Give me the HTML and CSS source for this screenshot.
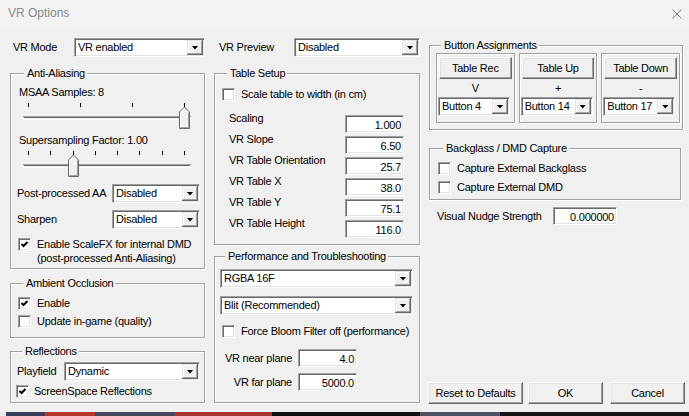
FILE: index.html
```html
<!DOCTYPE html>
<html lang="en">
<head>
    <meta charset="UTF-8">
    <meta name="viewport" content="width=device-width, initial-scale=1.0">
    <title>VR Options</title>
    <link rel="stylesheet" href="styles.css">
</head>
<body>
    <div class="window">
        <div class="title-bar">
            <span class="title-text">VR Options</span>
            <svg class="close-icon" width="10" height="10" viewBox="0 0 10 10">
                <path d="M0.5 0.5L9.5 9.5M9.5 0.5L0.5 9.5" stroke="#7a7a7a" stroke-width="1" fill="none"/>
            </svg>
        </div>

        <div class="dialog">
            <!-- Left column -->
            <div class="column">
                <div class="field-row top-row-left">
                    <span class="field-label">VR Mode</span>
                    <div class="combo combo-mode"><span class="combo-text">VR enabled</span><span class="combo-btn"></span></div>
                </div>

                <div class="group group-aa">
                    <div class="group-title">Anti-Aliasing</div>
                    <div class="caption">MSAA Samples: 8</div>
                    <svg class="slider" width="184" height="30" viewBox="0 0 184 30">
                        <path d="M9.5 3v4M61.5 3v4M113.5 3v4M165.5 3v4" stroke="#000"/>
                        <path d="M4 16.5h168" stroke="#a0a0a0"/>
                        <path d="M5 17.5h166" stroke="#696969"/>
                        <path d="M4 19.5h168" stroke="#fff"/>
                        <path d="M171.5 17v3" stroke="#fff"/>
                        <polygon points="160.5,28.5 160.5,12 165.5,7 170.5,12 170.5,28.5" fill="#f0f0f0" stroke="#696969"/>
                        <polyline points="161.5,27.5 161.5,12.5 165.5,8.5" fill="none" stroke="#fff"/>
                        <polyline points="169.5,12.5 169.5,27.5 161.5,27.5" fill="none" stroke="#a0a0a0"/>
                    </svg>
                    <div class="caption caption-second">Supersampling Factor: 1.00</div>
                    <svg class="slider" width="184" height="30" viewBox="0 0 184 30">
                        <path d="M9.5 3v4M31.5 3v4M54.5 3v4M76.5 3v4M98.5 3v4M120.5 3v4M143.5 3v4M165.5 3v4" stroke="#000"/>
                        <path d="M4 16.5h168" stroke="#a0a0a0"/>
                        <path d="M5 17.5h166" stroke="#696969"/>
                        <path d="M4 19.5h168" stroke="#fff"/>
                        <path d="M171.5 17v3" stroke="#fff"/>
                        <polygon points="49.5,28.5 49.5,12 54.5,7 59.5,12 59.5,28.5" fill="#f0f0f0" stroke="#696969"/>
                        <polyline points="50.5,27.5 50.5,12.5 54.5,8.5" fill="none" stroke="#fff"/>
                        <polyline points="58.5,12.5 58.5,27.5 50.5,27.5" fill="none" stroke="#a0a0a0"/>
                    </svg>
                    <div class="field-row aa-row">
                        <span class="field-label">Post-processed AA</span>
                        <div class="combo combo-aa"><span class="combo-text">Disabled</span><span class="combo-btn"></span></div>
                    </div>
                    <div class="field-row aa-row aa-row-second">
                        <span class="field-label">Sharpen</span>
                        <div class="combo combo-aa"><span class="combo-text">Disabled</span><span class="combo-btn"></span></div>
                    </div>
                    <label class="check check-multi check-scalefx">
                        <span class="check-box"><svg width="11" height="11" viewBox="0 0 11 11"><polyline points="2.5,5 4.5,7 8.5,3" fill="none" stroke="#000" stroke-width="2"/></svg></span>
                        <span class="check-text">Enable ScaleFX for internal DMD<br>(post-processed Anti-Aliasing)</span>
                    </label>
                </div>

                <div class="group group-ao">
                    <div class="group-title">Ambient Occlusion</div>
                    <label class="check check-first">
                        <span class="check-box"><svg width="11" height="11" viewBox="0 0 11 11"><polyline points="2.5,5 4.5,7 8.5,3" fill="none" stroke="#000" stroke-width="2"/></svg></span>
                        <span class="check-text">Enable</span>
                    </label>
                    <label class="check check-next">
                        <span class="check-box"></span>
                        <span class="check-text">Update in-game (quality)</span>
                    </label>
                </div>

                <div class="group group-refl">
                    <div class="group-title">Reflections</div>
                    <div class="field-row refl-row">
                        <span class="field-label">Playfield</span>
                        <div class="combo combo-playfield"><span class="combo-text">Dynamic</span><span class="combo-btn"></span></div>
                    </div>
                    <label class="check check-ssr">
                        <span class="check-box"><svg width="11" height="11" viewBox="0 0 11 11"><polyline points="2.5,5 4.5,7 8.5,3" fill="none" stroke="#000" stroke-width="2"/></svg></span>
                        <span class="check-text">ScreenSpace Reflections</span>
                    </label>
                </div>
            </div>

            <!-- Middle column -->
            <div class="column">
                <div class="field-row top-row-mid">
                    <span class="field-label">VR Preview</span>
                    <div class="combo combo-preview"><span class="combo-text">Disabled</span><span class="combo-btn"></span></div>
                </div>

                <div class="group group-table">
                    <div class="group-title">Table Setup</div>
                    <label class="check check-scale">
                        <span class="check-box"></span>
                        <span class="check-text">Scale table to width (in cm)</span>
                    </label>
                    <div class="value-row value-row-first">
                        <span class="field-label">Scaling</span>
                        <div class="edit">1.000</div>
                    </div>
                    <div class="value-row">
                        <span class="field-label">VR Slope</span>
                        <div class="edit">6.50</div>
                    </div>
                    <div class="value-row">
                        <span class="field-label">VR Table Orientation</span>
                        <div class="edit">25.7</div>
                    </div>
                    <div class="value-row">
                        <span class="field-label">VR Table X</span>
                        <div class="edit">38.0</div>
                    </div>
                    <div class="value-row">
                        <span class="field-label">VR Table Y</span>
                        <div class="edit">75.1</div>
                    </div>
                    <div class="value-row">
                        <span class="field-label">VR Table Height</span>
                        <div class="edit">116.0</div>
                    </div>
                </div>

                <div class="group group-perf">
                    <div class="group-title">Performance and Troubleshooting</div>
                    <div class="combo combo-wide combo-format"><span class="combo-text">RGBA 16F</span><span class="combo-btn"></span></div>
                    <div class="combo combo-wide combo-blit"><span class="combo-text">Blit (Recommended)</span><span class="combo-btn"></span></div>
                    <label class="check check-bloom">
                        <span class="check-box"></span>
                        <span class="check-text">Force Bloom Filter off (performance)</span>
                    </label>
                    <div class="plane-row plane-row-first">
                        <span class="field-label">VR near plane</span>
                        <div class="edit">4.0</div>
                    </div>
                    <div class="plane-row">
                        <span class="field-label">VR far plane</span>
                        <div class="edit">5000.0</div>
                    </div>
                </div>
            </div>

            <!-- Right column -->
            <div class="column">
                <div class="group group-buttons">
                    <div class="group-title">Button Assignments</div>
                    <div class="key-grid">
                        <div class="key-box">
                            <div class="btn">Table Rec</div>
                            <div class="key-symbol">V</div>
                            <div class="combo combo-key"><span class="combo-text">Button 4</span><span class="combo-btn"></span></div>
                        </div>
                        <div class="key-box">
                            <div class="btn">Table Up</div>
                            <div class="key-symbol">+</div>
                            <div class="combo combo-key"><span class="combo-text">Button 14</span><span class="combo-btn"></span></div>
                        </div>
                        <div class="key-box">
                            <div class="btn">Table Down</div>
                            <div class="key-symbol">-</div>
                            <div class="combo combo-key"><span class="combo-text">Button 17</span><span class="combo-btn"></span></div>
                        </div>
                    </div>
                </div>

                <div class="group group-capture">
                    <div class="group-title">Backglass / DMD Capture</div>
                    <label class="check check-first">
                        <span class="check-box"></span>
                        <span class="check-text">Capture External Backglass</span>
                    </label>
                    <label class="check check-capture-next">
                        <span class="check-box"></span>
                        <span class="check-text">Capture External DMD</span>
                    </label>
                </div>

                <div class="nudge-row">
                    <span class="field-label">Visual Nudge Strength</span>
                    <div class="edit">0.000000</div>
                </div>

                <div class="action-buttons">
                    <div class="btn btn-reset">Reset to Defaults</div>
                    <div class="btn btn-ok">OK</div>
                    <div class="btn btn-cancel">Cancel</div>
                </div>
            </div>
        </div>
    </div>
</body>
</html>
```

FILE: styles.css
```css
* {
    box-sizing: border-box;
}

html, body {
    margin: 0;
    padding: 0;
    height: 416px;
    overflow: hidden;
}

body {
    font-family: "Liberation Sans", Arial, sans-serif;
    font-size: 11px;
    letter-spacing: -0.25px;
    line-height: 13px;
    color: #000;
    /* desktop peeking out under the dialog */
    background: linear-gradient(to right,
        #e8e8e8 0 6px, #3a3d5c 6px 45px, #b5352f 45px 95px, #45485f 95px 175px,
        #a8322c 175px 272px, #121212 272px 420px, #505264 420px 500px, #161616 500px);
}

.window {
    height: 412px;
    background-color: #f0f0f0;
    display: flex;
    flex-direction: column;
}

.title-bar {
    height: 27px;
    flex: none;
    background-color: #f3f3f3;
    display: flex;
    align-items: center;
    justify-content: space-between;
    padding: 0 7px 0 8px;
}

.title-text {
    font-size: 12px;
    letter-spacing: 0;
    color: #8a8a8a;
}

.close-icon {
    display: block;
}

.dialog {
    flex: 1;
    display: grid;
    grid-template-columns: 195px 206px 254px;
    column-gap: 9px;
    padding: 11px 0 8px 10px;
}

.column {
    display: flex;
    flex-direction: column;
    min-height: 0;
}

.field-row {
    display: flex;
    align-items: center;
    height: 19px;
    flex: none;
}

.top-row-left .field-label {
    padding-left: 3px;
}

.top-row-mid .field-label {
    padding-left: 5px;
}

/* group boxes */
.group {
    flex: none;
    border: 1px solid #a0a0a0;
    box-shadow: inset 1px 1px #fff, 1px 1px #fff;
}

.group-title {
    display: table;
    margin: -7px 0 0 5px;
    padding: 0 2px 0 3px;
    background-color: #f0f0f0;
    white-space: nowrap;
}

/* combo boxes */
.combo {
    display: flex;
    align-items: stretch;
    height: 19px;
    padding: 1px;
    background-color: #fff;
    border: 1px solid;
    border-color: #a0a0a0 #fff #fff #a0a0a0;
    box-shadow: inset 1px 1px #696969, inset -1px -1px #e3e3e3;
    flex: none;
}

.combo-text {
    flex: 1;
    padding-left: 2px;
    line-height: 15px;
    white-space: nowrap;
    overflow: hidden;
}

.combo-btn {
    width: 16px;
    flex: none;
    display: flex;
    align-items: center;
    justify-content: center;
    background-color: #f0f0f0;
    box-shadow: inset -1px -1px #696969, inset 1px 1px #e3e3e3, inset -2px -2px #a0a0a0, inset 2px 2px #fff;
}

.combo-btn::after {
    content: "";
    width: 7px;
    height: 4px;
    background-color: #000;
    clip-path: polygon(0 0, 7px 0, 3.5px 4px);
}

/* edit boxes */
.edit {
    height: 18px;
    flex: none;
    padding: 1px 2px 1px 2px;
    line-height: 16px;
    text-align: right;
    background-color: #fff;
    border: 1px solid;
    border-color: #a0a0a0 #fff #fff #a0a0a0;
    box-shadow: inset 1px 1px #696969, inset -1px -1px #e3e3e3;
}

/* check boxes */
.check {
    display: flex;
    align-items: center;
    height: 13px;
    flex: none;
}

.check-box {
    width: 13px;
    height: 13px;
    flex: none;
    background-color: #fff;
    border: 1px solid;
    border-color: #a0a0a0 #fff #fff #a0a0a0;
    box-shadow: inset 1px 1px #696969, inset -1px -1px #e3e3e3;
}

.check-box svg {
    display: block;
}

.check-text {
    margin-left: 6px;
    white-space: nowrap;
}

.check-multi {
    height: auto;
    align-items: flex-start;
    line-height: 14px;
}

.check-multi .check-box {
    margin-top: 1px;
}

/* push buttons */
.btn {
    height: 22px;
    flex: none;
    display: flex;
    align-items: center;
    justify-content: center;
    background-color: #f0f0f0;
    border: 1px solid;
    border-color: #fff #696969 #696969 #fff;
    box-shadow: inset -1px -1px #a0a0a0, inset 1px 1px #e3e3e3;
    white-space: nowrap;
}

/* left column */
.group-aa {
    margin-top: 16px;
    height: 196px;
    padding: 0 4px 0 8px;
}

.caption {
    margin-top: 6px;
}

.caption-second {
    margin-top: 4px;
}

.slider {
    display: block;
    margin-top: 1px;
}

.aa-row {
    margin-top: 6px;
}

.aa-row-second {
    margin-top: 7px;
}

.aa-row .field-label {
    margin-left: -2px;
}

.combo-mode {
    width: 131px;
    margin-left: auto;
}

.combo-aa {
    width: 88px;
    margin-left: auto;
}

.check-scalefx {
    margin-top: 8px;
    margin-left: -1px;
}

.group-ao {
    margin-top: 14px;
    height: 55px;
    padding-left: 7px;
}

.check-first {
    margin-top: 7px;
}

.check-next {
    margin-top: 5px;
}

.group-refl {
    margin-top: 13px;
    height: 52px;
    padding: 0 4px 0 6px;
}

.refl-row {
    margin-top: 4px;
}

.combo-playfield {
    width: 136px;
    margin-left: auto;
}

.check-ssr {
    margin-top: 4px;
    margin-left: -1px;
}

.check-ssr .check-text {
    margin-left: 5px;
}

/* middle column */
.combo-preview {
    width: 126px;
    margin-left: auto;
}

.group-table {
    margin-top: 16px;
    height: 172px;
    padding: 0 15px 0 7px;
}

.check-scale {
    margin-top: 8px;
}

.value-row {
    display: flex;
    align-items: flex-start;
    height: 18px;
    margin-top: 3px;
    flex: none;
}

.value-row-first {
    margin-top: 14px;
}

.value-row .field-label {
    margin: -3px 0 0 7px;
}

.value-row .edit {
    width: 59px;
    margin-left: auto;
}

.group-perf {
    margin-top: 11px;
    height: 147px;
    padding-left: 5px;
}

.combo-wide {
    width: 193px;
}

.combo-format {
    margin-top: 6px;
}

.combo-blit {
    margin-top: 8px;
}

.check-bloom {
    margin: 10px 0 0 2px;
}

.plane-row {
    display: flex;
    align-items: center;
    height: 18px;
    margin: 6px 0 0 2px;
    flex: none;
}

.plane-row-first {
    margin-top: 11px;
}

.plane-row .field-label {
    width: 70px;
    margin-right: 6px;
    text-align: right;
}

.plane-row .edit {
    width: 59px;
}

/* right column */
.group-buttons {
    margin-top: 7px;
    height: 85px;
    padding: 0 2px 0 6px;
}

.key-grid {
    display: grid;
    grid-template-columns: repeat(3, 1fr);
    column-gap: 4px;
    height: 70px;
    margin-top: 1px;
}

.key-box {
    border: 1px solid #a0a0a0;
    box-shadow: inset 1px 1px #fff, 1px 1px #fff;
    padding: 3px 2px 0;
}

.key-symbol {
    margin-top: 3px;
    text-align: center;
}

.combo-key {
    width: 72px;
    margin: 2px 0 0 -1px;
}

.group-capture {
    margin-top: 18px;
    height: 52px;
    width: 252px;
    padding-left: 8px;
}

.check-capture-next {
    margin-top: 6px;
}

.nudge-row {
    display: flex;
    align-items: center;
    height: 18px;
    margin-top: 7px;
    padding-left: 8px;
    flex: none;
}

.nudge-row .field-label {
    width: 116px;
}

.nudge-row .edit {
    width: 64px;
}

.action-buttons {
    display: flex;
    margin: auto 0 0 -1px;
}

.btn-reset {
    width: 95px;
}

.btn-ok {
    width: 75px;
    margin-left: 5px;
}

.btn-cancel {
    width: 75px;
    margin-left: 7px;
}
```
